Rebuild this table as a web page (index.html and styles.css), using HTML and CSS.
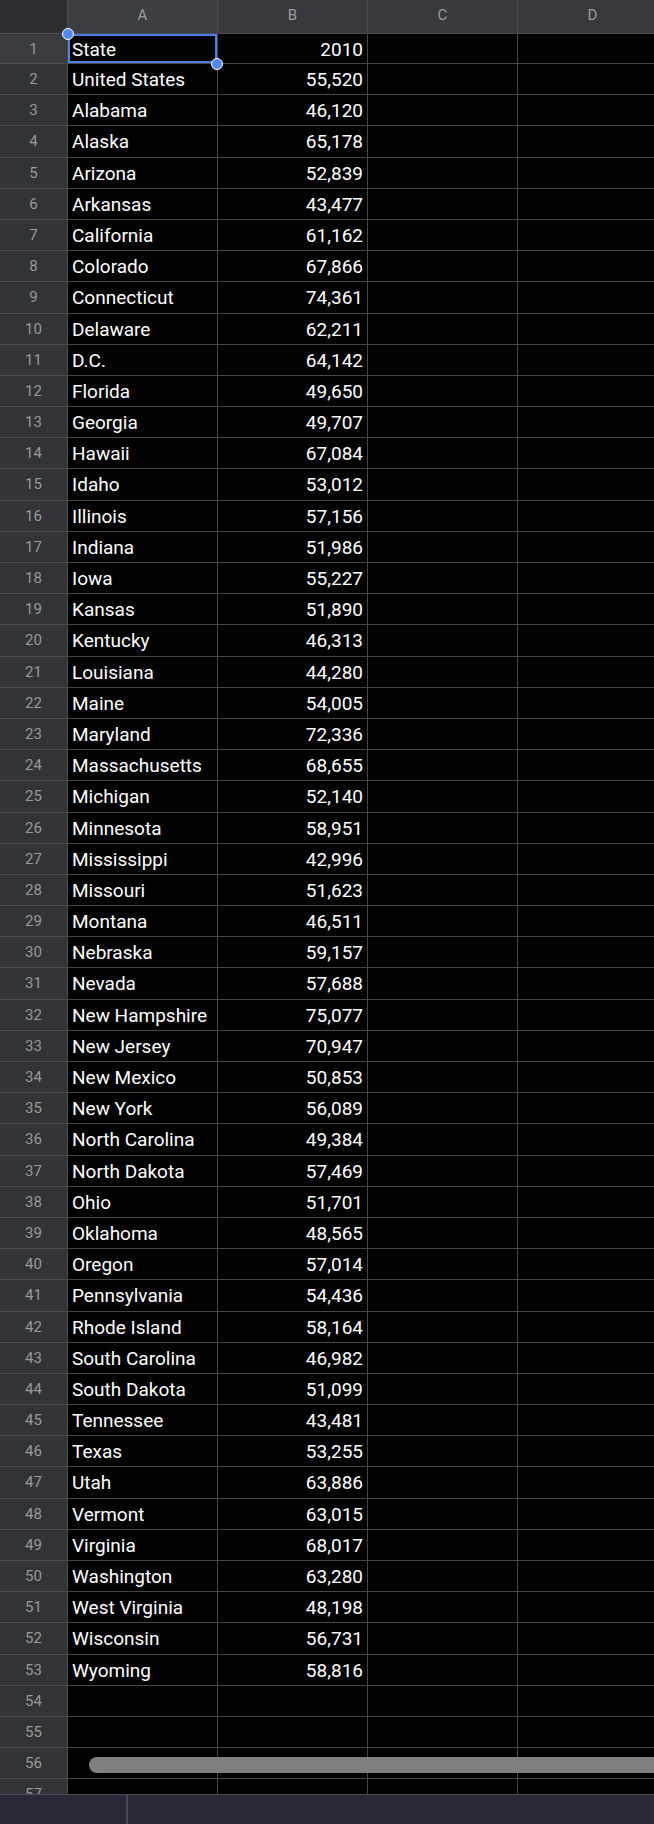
FILE: index.html
```html
<!DOCTYPE html>
<html>
<head>
<meta charset="utf-8">
<title>Sheet</title>
<link rel="stylesheet" href="styles.css">
</head>
<body>
<div class="app">
  <div class="sheet">
    <div class="hdr">
      <div class="corner"></div>
      <div class="ch sel">A</div>
      <div class="ch">B</div>
      <div class="ch">C</div>
      <div class="ch">D</div>
    </div>
    <div class="row first"><div class="rh sel">1</div><div class="c">State</div><div class="c n">2010</div><div class="c"></div><div class="c"></div></div>
    <div class="row"><div class="rh">2</div><div class="c">United States</div><div class="c n">55,520</div><div class="c"></div><div class="c"></div></div>
    <div class="row"><div class="rh">3</div><div class="c">Alabama</div><div class="c n">46,120</div><div class="c"></div><div class="c"></div></div>
    <div class="row"><div class="rh">4</div><div class="c">Alaska</div><div class="c n">65,178</div><div class="c"></div><div class="c"></div></div>
    <div class="row"><div class="rh">5</div><div class="c">Arizona</div><div class="c n">52,839</div><div class="c"></div><div class="c"></div></div>
    <div class="row"><div class="rh">6</div><div class="c">Arkansas</div><div class="c n">43,477</div><div class="c"></div><div class="c"></div></div>
    <div class="row"><div class="rh">7</div><div class="c">California</div><div class="c n">61,162</div><div class="c"></div><div class="c"></div></div>
    <div class="row"><div class="rh">8</div><div class="c">Colorado</div><div class="c n">67,866</div><div class="c"></div><div class="c"></div></div>
    <div class="row"><div class="rh">9</div><div class="c">Connecticut</div><div class="c n">74,361</div><div class="c"></div><div class="c"></div></div>
    <div class="row"><div class="rh">10</div><div class="c">Delaware</div><div class="c n">62,211</div><div class="c"></div><div class="c"></div></div>
    <div class="row"><div class="rh">11</div><div class="c">D.C.</div><div class="c n">64,142</div><div class="c"></div><div class="c"></div></div>
    <div class="row"><div class="rh">12</div><div class="c">Florida</div><div class="c n">49,650</div><div class="c"></div><div class="c"></div></div>
    <div class="row"><div class="rh">13</div><div class="c">Georgia</div><div class="c n">49,707</div><div class="c"></div><div class="c"></div></div>
    <div class="row"><div class="rh">14</div><div class="c">Hawaii</div><div class="c n">67,084</div><div class="c"></div><div class="c"></div></div>
    <div class="row"><div class="rh">15</div><div class="c">Idaho</div><div class="c n">53,012</div><div class="c"></div><div class="c"></div></div>
    <div class="row"><div class="rh">16</div><div class="c">Illinois</div><div class="c n">57,156</div><div class="c"></div><div class="c"></div></div>
    <div class="row"><div class="rh">17</div><div class="c">Indiana</div><div class="c n">51,986</div><div class="c"></div><div class="c"></div></div>
    <div class="row"><div class="rh">18</div><div class="c">Iowa</div><div class="c n">55,227</div><div class="c"></div><div class="c"></div></div>
    <div class="row"><div class="rh">19</div><div class="c">Kansas</div><div class="c n">51,890</div><div class="c"></div><div class="c"></div></div>
    <div class="row"><div class="rh">20</div><div class="c">Kentucky</div><div class="c n">46,313</div><div class="c"></div><div class="c"></div></div>
    <div class="row"><div class="rh">21</div><div class="c">Louisiana</div><div class="c n">44,280</div><div class="c"></div><div class="c"></div></div>
    <div class="row"><div class="rh">22</div><div class="c">Maine</div><div class="c n">54,005</div><div class="c"></div><div class="c"></div></div>
    <div class="row"><div class="rh">23</div><div class="c">Maryland</div><div class="c n">72,336</div><div class="c"></div><div class="c"></div></div>
    <div class="row"><div class="rh">24</div><div class="c">Massachusetts</div><div class="c n">68,655</div><div class="c"></div><div class="c"></div></div>
    <div class="row"><div class="rh">25</div><div class="c">Michigan</div><div class="c n">52,140</div><div class="c"></div><div class="c"></div></div>
    <div class="row"><div class="rh">26</div><div class="c">Minnesota</div><div class="c n">58,951</div><div class="c"></div><div class="c"></div></div>
    <div class="row"><div class="rh">27</div><div class="c">Mississippi</div><div class="c n">42,996</div><div class="c"></div><div class="c"></div></div>
    <div class="row"><div class="rh">28</div><div class="c">Missouri</div><div class="c n">51,623</div><div class="c"></div><div class="c"></div></div>
    <div class="row"><div class="rh">29</div><div class="c">Montana</div><div class="c n">46,511</div><div class="c"></div><div class="c"></div></div>
    <div class="row"><div class="rh">30</div><div class="c">Nebraska</div><div class="c n">59,157</div><div class="c"></div><div class="c"></div></div>
    <div class="row"><div class="rh">31</div><div class="c">Nevada</div><div class="c n">57,688</div><div class="c"></div><div class="c"></div></div>
    <div class="row"><div class="rh">32</div><div class="c">New Hampshire</div><div class="c n">75,077</div><div class="c"></div><div class="c"></div></div>
    <div class="row"><div class="rh">33</div><div class="c">New Jersey</div><div class="c n">70,947</div><div class="c"></div><div class="c"></div></div>
    <div class="row"><div class="rh">34</div><div class="c">New Mexico</div><div class="c n">50,853</div><div class="c"></div><div class="c"></div></div>
    <div class="row"><div class="rh">35</div><div class="c">New York</div><div class="c n">56,089</div><div class="c"></div><div class="c"></div></div>
    <div class="row"><div class="rh">36</div><div class="c">North Carolina</div><div class="c n">49,384</div><div class="c"></div><div class="c"></div></div>
    <div class="row"><div class="rh">37</div><div class="c">North Dakota</div><div class="c n">57,469</div><div class="c"></div><div class="c"></div></div>
    <div class="row"><div class="rh">38</div><div class="c">Ohio</div><div class="c n">51,701</div><div class="c"></div><div class="c"></div></div>
    <div class="row"><div class="rh">39</div><div class="c">Oklahoma</div><div class="c n">48,565</div><div class="c"></div><div class="c"></div></div>
    <div class="row"><div class="rh">40</div><div class="c">Oregon</div><div class="c n">57,014</div><div class="c"></div><div class="c"></div></div>
    <div class="row"><div class="rh">41</div><div class="c">Pennsylvania</div><div class="c n">54,436</div><div class="c"></div><div class="c"></div></div>
    <div class="row"><div class="rh">42</div><div class="c">Rhode Island</div><div class="c n">58,164</div><div class="c"></div><div class="c"></div></div>
    <div class="row"><div class="rh">43</div><div class="c">South Carolina</div><div class="c n">46,982</div><div class="c"></div><div class="c"></div></div>
    <div class="row"><div class="rh">44</div><div class="c">South Dakota</div><div class="c n">51,099</div><div class="c"></div><div class="c"></div></div>
    <div class="row"><div class="rh">45</div><div class="c">Tennessee</div><div class="c n">43,481</div><div class="c"></div><div class="c"></div></div>
    <div class="row"><div class="rh">46</div><div class="c">Texas</div><div class="c n">53,255</div><div class="c"></div><div class="c"></div></div>
    <div class="row"><div class="rh">47</div><div class="c">Utah</div><div class="c n">63,886</div><div class="c"></div><div class="c"></div></div>
    <div class="row"><div class="rh">48</div><div class="c">Vermont</div><div class="c n">63,015</div><div class="c"></div><div class="c"></div></div>
    <div class="row"><div class="rh">49</div><div class="c">Virginia</div><div class="c n">68,017</div><div class="c"></div><div class="c"></div></div>
    <div class="row"><div class="rh">50</div><div class="c">Washington</div><div class="c n">63,280</div><div class="c"></div><div class="c"></div></div>
    <div class="row"><div class="rh">51</div><div class="c">West Virginia</div><div class="c n">48,198</div><div class="c"></div><div class="c"></div></div>
    <div class="row"><div class="rh">52</div><div class="c">Wisconsin</div><div class="c n">56,731</div><div class="c"></div><div class="c"></div></div>
    <div class="row"><div class="rh">53</div><div class="c">Wyoming</div><div class="c n">58,816</div><div class="c"></div><div class="c"></div></div>
    <div class="row"><div class="rh">54</div><div class="c"></div><div class="c n"></div><div class="c"></div><div class="c"></div></div>
    <div class="row"><div class="rh">55</div><div class="c"></div><div class="c n"></div><div class="c"></div><div class="c"></div></div>
    <div class="row"><div class="rh">56</div><div class="c"></div><div class="c n"></div><div class="c"></div><div class="c"></div></div>
    <div class="row"><div class="rh">57</div><div class="c"></div><div class="c n"></div><div class="c"></div><div class="c"></div></div>
    <div class="row"><div class="rh">58</div><div class="c"></div><div class="c n"></div><div class="c"></div><div class="c"></div></div>

    <div class="selection"></div>
    <div class="handle h-tl"></div>
    <div class="handle h-br"></div>
    <div class="hscroll"></div>
  </div>
  <div class="tabs">
    <div class="tab-left"></div>
    <div class="tab-rest"></div>
  </div>
</div>
</body>
</html>
```

FILE: styles.css
```css
html, body {
  margin: 0;
  padding: 0;
  background: #000;
}
body {
  width: 654px;
  height: 1824px;
  overflow: hidden;
  font-family: Roboto, "Liberation Sans", Arial, sans-serif;
}
.app {
  display: flex;
  flex-direction: column;
  height: 1824px;
}
.sheet {
  flex: 1;
  position: relative;
  overflow: hidden;
}
.hdr, .row {
  display: grid;
  grid-template-columns: 68px 150px 150px 150px 150px;
  width: 668px;
}
.hdr {
  height: 34px;
}
.corner {
  background: #2d2e31;
  border-right: 1px solid #4c4d51;
  border-bottom: 1px solid #4c4d51;
}
.ch {
  background: #38393c;
  border-right: 1px solid #4c4d51;
  border-bottom: 1px solid #4c4d51;
  color: #9a9ca0;
  font-size: 15px;
  line-height: 30px;
  text-align: center;
}
.ch.sel {
  background: #3d3e42;
}
.row {
  height: 31.2px;
}
.row.first {
  height: 30px;
}
.rh {
  background: #323336;
  border-right: 1px solid #4c4d51;
  border-bottom: 1px solid #4c4d51;
  color: #97999c;
  font-size: 15px;
  line-height: 30px;
  text-align: center;
  overflow: hidden;
}
.rh.sel {
  background: #3a3b3f;
}
.c {
  border-right: 1px solid #464646;
  border-bottom: 1px solid #464646;
  color: #fff;
  font-size: 19px;
  line-height: 30px;
  padding: 1px 4px 0 4px;
  white-space: nowrap;
  overflow: hidden;
}
.c.n {
  text-align: right;
}
.selection {
  position: absolute;
  left: 68px;
  top: 34px;
  width: 149px;
  height: 29px;
  box-sizing: border-box;
  border: 2px solid #4f80e8;
  pointer-events: none;
}
.handle {
  position: absolute;
  width: 10px;
  height: 10px;
  border-radius: 50%;
  background: #5588ee;
  border: 1px solid #fff;
}
.h-tl {
  left: 61.5px;
  top: 27.5px;
}
.h-br {
  left: 210.5px;
  top: 57.5px;
}
.hscroll {
  position: absolute;
  left: 89px;
  top: 1756.7px;
  width: 620px;
  height: 16px;
  border-radius: 8px;
  background: #808080;
}
.tabs {
  height: 30px;
  box-sizing: border-box;
  border-top: 1px solid #4b4659;
  background: #292836;
  display: flex;
}
.tab-left {
  width: 126px;
  border-right: 2px solid #4b4659;
}
.tab-rest {
  flex: 1;
}
```
